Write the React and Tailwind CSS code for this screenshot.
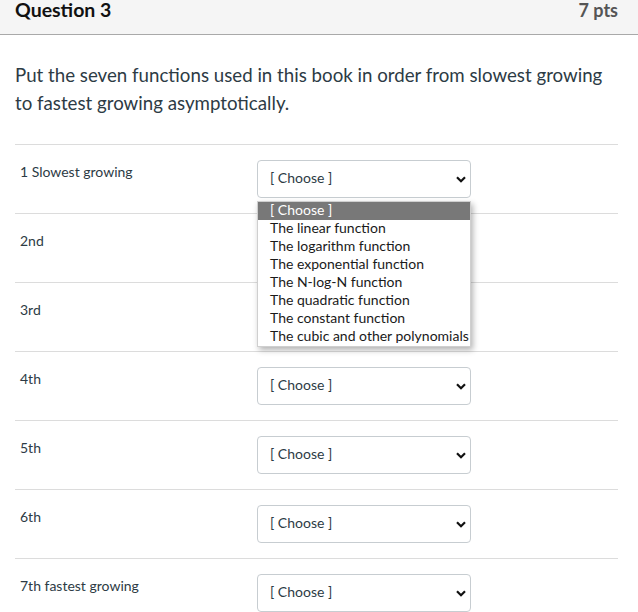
import React from "react";

const font = { fontFamily: "Lato, 'Noto Sans', sans-serif" };

const rows = [
  "1 Slowest growing",
  "2nd",
  "3rd",
  "4th",
  "5th",
  "6th",
  "7th fastest growing",
];

const options = [
  "[ Choose ]",
  "The linear function",
  "The logarithm function",
  "The exponential function",
  "The N-log-N function",
  "The quadratic function",
  "The constant function",
  "The cubic and other polynomials",
];

function Chevron() {
  return (
    <svg width="10" height="7" viewBox="0 0 10 7" className="shrink-0">
      <path d="M1 1.2 L5 5.2 L9 1.2" fill="none" stroke="#111" strokeWidth="2.2" strokeLinecap="butt" />
    </svg>
  );
}

function Select({ hidden }) {
  return (
    <div
      className={
        hidden
          ? "invisible w-[214px] h-[38px] border border-[#c7cdd1] rounded-[4px] bg-white flex items-center justify-between pl-3 pr-[4px]"
          : "w-[214px] h-[38px] border border-[#c7cdd1] rounded-[4px] bg-white flex items-center justify-between pl-3 pr-[4px]"
      }
    >
      <span className="text-[14px] text-[#2d3b45] leading-[20px] pb-[2px]">[ Choose ]</span>
      <Chevron />
    </div>
  );
}

export default function App() {
  return (
    <div className="w-[638px] h-[612px] overflow-hidden bg-white text-[#2d3b45]" style={font}>
      <div className="h-[35px] bg-[#f5f5f5] border-b border-[#a9a9a9] flex justify-between pl-[15px] pr-[20px]">
        <span className="text-[19.5px] font-bold leading-[20px] text-[#111]">Question 3</span>
        <span className="text-[18px] font-bold leading-[20px] text-[#555]">7 pts</span>
      </div>
      <div className="pl-[15px] pr-[20px]">
        <p className="mt-[27px] mb-[27px] text-[18.7px] leading-[27.5px] text-[#2d3b45]">
          Put the seven functions used in this book in order from slowest growing to fastest growing asymptotically.
        </p>
        <div className="relative">
          {rows.map((r, i) => (
            <div key={r} className="border-t border-[#dcdcdc] flex items-start pt-[15px] pb-[15px]">
              <div className="w-[242px] pl-[5px] pt-[1px] text-[14px] leading-[21px] text-[#2d3b45]">{r}</div>
              <Select hidden={i === 1 || i === 2} />
            </div>
          ))}
          <div className="absolute left-[242px] top-[57px] w-[214px] bg-white border border-[#cfcfcf] shadow-[2px_3px_6px_rgba(0,0,0,0.3)]">
            {options.map((o, i) => (
              <div
                key={o}
                className={
                  i === 0
                    ? "h-[18px] leading-[16px] pl-3 text-[14px] bg-[#787878] text-white"
                    : "h-[18px] leading-[16px] pl-3 text-[14px] text-[#1a1a1a]"
                }
              >
                {o}
              </div>
            ))}
          </div>
        </div>
      </div>
    </div>
  );
}
